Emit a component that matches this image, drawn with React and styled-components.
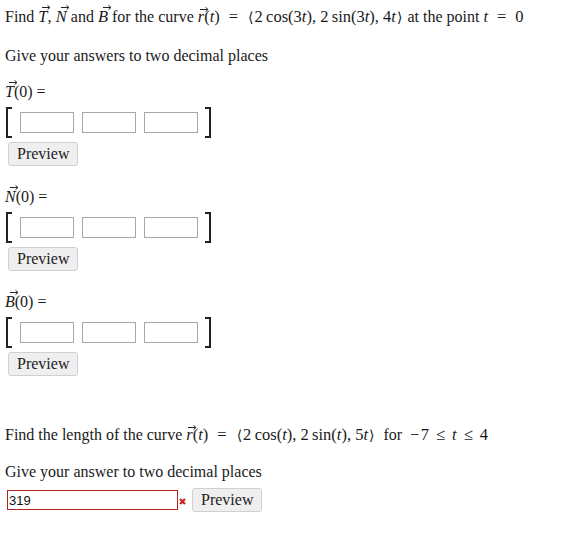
import React from "react";
import styled, { createGlobalStyle } from "styled-components";

const GlobalStyle = createGlobalStyle`
  html, body {
    margin: 0;
    padding: 0;
    background: #ffffff;
  }
  body {
    font-family: "Liberation Serif", "Times New Roman", serif;
    color: #1a1a1a;
  }
`;

const Page = styled.div`
  padding: 0 5px;
  font-size: 16px;
`;

const Para = styled.p`
  margin: ${props => props.margin || "0"};
  height: 22px;
  line-height: 22px;
  white-space: nowrap;
`;

const MathSpan = styled.span`
  font-family: "Liberation Serif", "DejaVu Serif", serif;
  font-size: 16.5px;
`;

const Ital = styled.i`
  font-style: italic;
`;

const Angle = styled.span`
  font-family: "DejaVu Serif", serif;
  font-size: 14px;
  margin: 0 1px;
`;

const Rel = styled.span`
  display: inline-block;
  margin: 0 ${props => props.space || 7}px;
`;

const VecWrap = styled.span`
  position: relative;
  display: inline-block;
  line-height: 1;
  font-style: italic;
`;

const VecArrow = styled.svg`
  position: absolute;
  left: ${props => props.left || 3}px;
  top: ${props => props.top || -5}px;
  width: 10px;
  height: 6px;
  overflow: visible;
`;

const Vec = ({ children, left, top }) => (
  <VecWrap>
    {children}
    <VecArrow viewBox="0 0 10 6" left={left} top={top}>
      <path d="M1 3.5 H8.5 M6.5 1.3 L9 3.5 L6.5 5.7" stroke="#222" strokeWidth="1" fill="none" />
    </VecArrow>
  </VecWrap>
);

const Label = styled.div`
  margin-top: ${props => props.top || 0}px;
  font-size: 16px;
  height: 20px;
  line-height: 20px;
`;

const VectorRow = styled.div`
  display: flex;
  align-items: center;
  margin-top: 5px;
  margin-left: 1px;
  height: 31px;
`;

const Bracket = styled.div`
  box-sizing: border-box;
  width: 6px;
  height: 31px;
  border-top: 2px solid #222;
  border-bottom: 2px solid #222;
  ${props =>
    props.right
      ? "border-right: 2px solid #222; margin-left: 7px;"
      : "border-left: 2px solid #222; margin-right: 8px;"}
`;

const Cell = styled.input`
  box-sizing: border-box;
  width: 54px;
  height: 21px;
  margin: 0 0 0 ${props => (props.first ? 0 : 8)}px;
  border: 1px solid #a8a8a8;
  padding: 0 2px;
  font-family: "Liberation Sans", Arial, sans-serif;
  font-size: 13px;
  background: #fff;
  outline: none;
`;

const PreviewButton = styled.button`
  display: block;
  box-sizing: border-box;
  height: 24px;
  padding: 0 8px;
  margin: ${props => props.margin || "4px 0 0 3px"};
  font-family: "Liberation Serif", "Times New Roman", serif;
  font-size: 16px;
  line-height: 22px;
  color: #222;
  background: #efefef;
  border: 1px solid #d0d0d0;
  border-radius: 3px;
`;

const AnswerRow = styled.div`
  display: flex;
  align-items: center;
  height: 24px;
  margin-top: 5px;
  margin-left: 2px;
`;

const AnswerInput = styled.input`
  box-sizing: border-box;
  width: 171px;
  height: 20px;
  margin: 0;
  padding: 0 1px;
  border: 1px solid #b22222;
  font-family: "Liberation Sans", Arial, sans-serif;
  font-size: 13px;
  color: #111;
  outline: none;
`;

const ErrorMark = styled.svg`
  width: 7px;
  height: 7px;
  margin-left: 1px;
  margin-top: 3px;
`;

const Section = styled.div``;

const vectorAnswers = [
  { name: "T", top: 15 },
  { name: "N", top: 21 },
  { name: "B", top: 21 }
];

const App = () => {
  return (
    <>
      <GlobalStyle />
      <Page>
        <Para margin="6px 0 0 0">
          Find <MathSpan><Vec>T</Vec>, <Vec left={4}>N</Vec></MathSpan> and{" "}
          <MathSpan><Vec left={4}>B</Vec></MathSpan> for the curve{" "}
          <MathSpan>
            <Vec left={1} top={-3}>r</Vec>(<Ital>t</Ital>)<Rel space={9}>=</Rel><Angle>⟨</Angle>2&#8239;cos(3<Ital>t</Ital>), 2&#8239;sin(3<Ital>t</Ital>), 4<Ital>t</Ital><Angle>⟩</Angle>
          </MathSpan>{" "}
          at the point <MathSpan><Ital>t</Ital><Rel space={9}>=</Rel>0</MathSpan>
        </Para>
        <Para margin="17px 0 0 0">Give your answers to two decimal places</Para>

        {vectorAnswers.map(v => (
          <Section key={v.name}>
            <Label top={v.top}>
              <Vec left={v.name === "T" ? 3 : 4}>{v.name}</Vec>(0) =
            </Label>
            <VectorRow>
              <Bracket />
              <Cell first />
              <Cell />
              <Cell />
              <Bracket right />
            </VectorRow>
            <PreviewButton>Preview</PreviewButton>
          </Section>
        ))}

        <Para margin="48px 0 0 0">
          Find the length of the curve{" "}
          <MathSpan>
            <Vec left={1} top={-3}>r</Vec>(<Ital>t</Ital>)<Rel space={9}>=</Rel><Angle>⟨</Angle>2&#8239;cos(<Ital>t</Ital>), 2&#8239;sin(<Ital>t</Ital>), 5<Ital>t</Ital><Angle>⟩</Angle>
          </MathSpan>
          &nbsp; for&nbsp; <MathSpan>−&#8202;7<Rel>≤</Rel><Ital>t</Ital><Rel>≤</Rel>4</MathSpan>
        </Para>
        <Para margin="15px 0 0 0">Give your answer to two decimal places</Para>
        <AnswerRow>
          <AnswerInput defaultValue="319" />
          <ErrorMark viewBox="0 0 7 7">
            <path d="M1 1 L6 6 M6 1 L1 6" stroke="#cc2222" strokeWidth="2.2" />
          </ErrorMark>
          <PreviewButton margin="0 0 0 6px">Preview</PreviewButton>
        </AnswerRow>
      </Page>
    </>
  );
};

export default App;
